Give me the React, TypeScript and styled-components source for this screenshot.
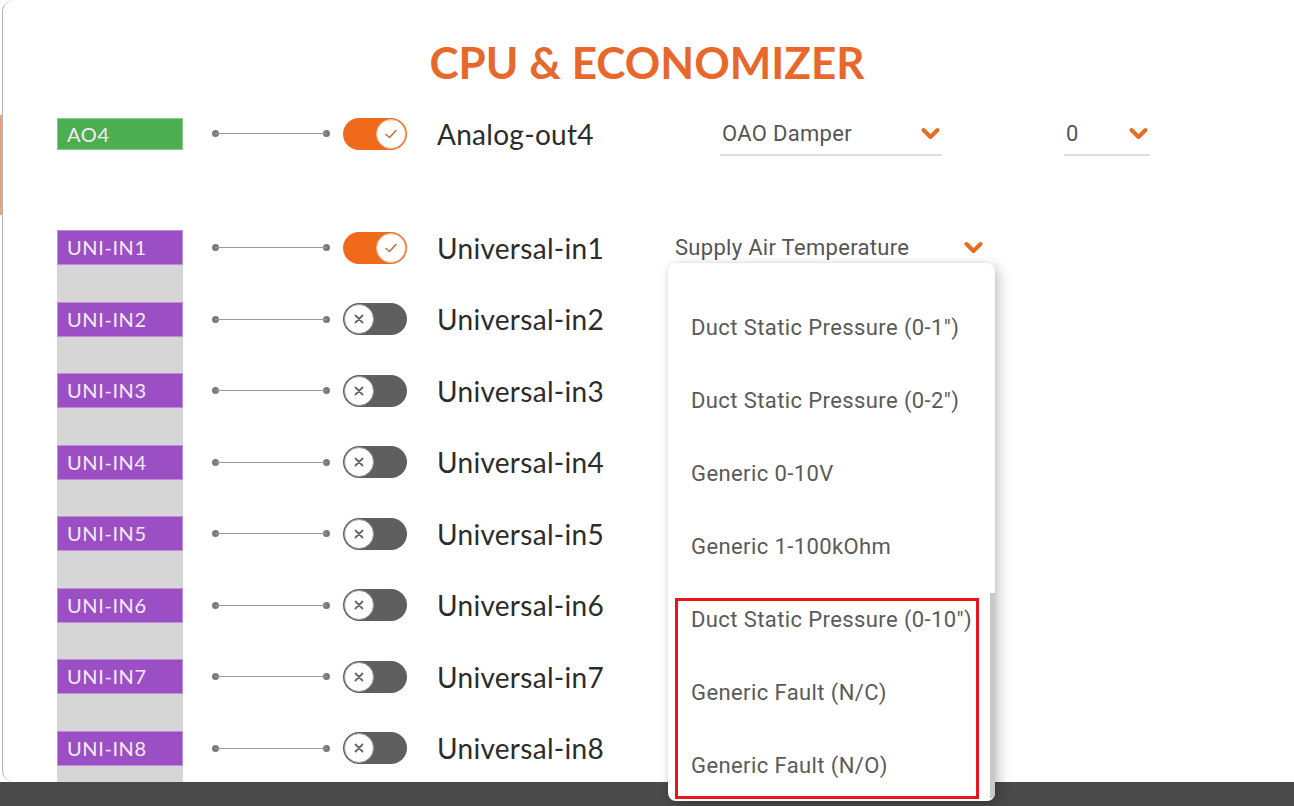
import styled, { createGlobalStyle } from "styled-components";

const GlobalStyle = createGlobalStyle`
    html, body {
        margin: 0;
        padding: 0;
        background: #ffffff;
    }
    * {
        box-sizing: border-box;
    }
`;

const Page = styled.div`
    position: relative;
    width: 1294px;
    height: 806px;
    overflow: hidden;
    display: flex;
    flex-direction: column;
    background: #ffffff;
`;

const Card = styled.div`
    height: 782px;
    margin-left: 2px;
    margin-right: 3px;
    border-left: 1px solid #b3b3b3;
    border-radius: 12px;
    background: #ffffff;
    overflow: hidden;
`;

const BottomBar = styled.div`
    flex: 1;
    background: #4a4a4a;
`;

const SideTab = styled.div`
    position: absolute;
    left: 0;
    top: 115px;
    width: 2px;
    height: 100px;
    background: #e9a47c;
`;

const Title = styled.h1`
    margin: 0;
    height: 98px;
    padding-top: 38px;
    text-align: center;
    font-family: Lato, "Liberation Sans", sans-serif;
    font-weight: 700;
    font-size: 44px;
    line-height: 48px;
    color: #e8672b;
`;

const Spacer = styled.div`
    height: 42.5px;
`;

const Row = styled.div`
    display: flex;
    align-items: center;
    height: 71.5px;
    padding-left: 54px;
`;

const LabelCell = styled.div<{ $strip: "none" | "first" | "full" }>`
    width: 126px;
    align-self: stretch;
    display: flex;
    align-items: center;
    background: ${(p) =>
        p.$strip === "none"
            ? "transparent"
            : p.$strip === "first"
            ? "linear-gradient(to bottom, transparent 50%, #d6d6d6 50%)"
            : "#d6d6d6"};
`;

const Label = styled.div<{ $color: string; $h: number }>`
    width: 126px;
    height: ${(p) => p.$h}px;
    background: ${(p) => p.$color};
    color: #f4ecf8;
    font-family: Lato, "Liberation Sans", sans-serif;
    font-size: 20px;
    letter-spacing: 0.6px;
    line-height: ${(p) => p.$h - 2}px;
    padding-left: 9px;
    border: 1px solid rgba(255, 255, 255, 0.35);
`;

const Connector = styled.div`
    position: relative;
    margin-left: 29px;
    width: 118px;
    height: 7px;
    display: flex;
    align-items: center;
    justify-content: space-between;

    &::before {
        content: "";
        position: absolute;
        left: 3px;
        right: 3px;
        top: 3px;
        height: 1px;
        background: #9a9a9a;
    }
`;

const Dot = styled.span`
    width: 7px;
    height: 7px;
    border-radius: 50%;
    background: #7a7a7a;
`;

const Track = styled.div<{ $on: boolean }>`
    margin-left: 13px;
    width: 64px;
    height: 32px;
    border-radius: 16px;
    background: ${(p) => (p.$on ? "#f06a1c" : "#5f5f5f")};
    display: flex;
    align-items: center;
    justify-content: ${(p) => (p.$on ? "flex-end" : "flex-start")};
    padding: 0 1px;
`;

const Knob = styled.div<{ $on: boolean }>`
    width: 30px;
    height: 30px;
    border-radius: 50%;
    background: #ffffff;
    border: 1.5px solid ${(p) => (p.$on ? "#f5b48c" : "#9a9a9a")};
    display: flex;
    align-items: center;
    justify-content: center;
`;

const Name = styled.div`
    margin-left: 30px;
    width: 236px;
    font-family: Lato, "Liberation Sans", sans-serif;
    font-size: 28px;
    letter-spacing: 0.3px;
    color: #2c2c2c;
    white-space: nowrap;
`;

const Select = styled.div<{ $offset: number; $width: number; $line: boolean }>`
    margin-left: ${(p) => p.$offset}px;
    width: ${(p) => p.$width}px;
    height: 44px;
    display: flex;
    align-items: center;
    justify-content: space-between;
    padding: 2px 2px 0 2px;
    border-bottom: 2px solid ${(p) => (p.$line ? "#dedede" : "transparent")};
    font-family: Roboto, "Liberation Sans", sans-serif;
    font-size: 22px;
    letter-spacing: 0.3px;
    color: #555555;
    white-space: nowrap;
`;

const Menu = styled.div`
    position: absolute;
    left: 668px;
    top: 263px;
    width: 327px;
    height: 538px;
    background: #ffffff;
    border-radius: 8px;
    box-shadow: 4px 4px 14px rgba(0, 0, 0, 0.22), 0 0 4px rgba(0, 0, 0, 0.08);
    padding-top: 27.5px;
    overflow: hidden;
`;

const MenuItem = styled.div`
    height: 73px;
    display: flex;
    align-items: center;
    padding-left: 23px;
    font-family: Roboto, "Liberation Sans", sans-serif;
    font-size: 22px;
    letter-spacing: 0.4px;
    color: #5a5a5a;
    white-space: nowrap;
`;

const ScrollThumb = styled.div`
    position: absolute;
    right: 0;
    top: 330px;
    width: 5px;
    height: 205px;
    background: #c9c9c9;
`;

const Highlight = styled.div`
    position: absolute;
    left: 675px;
    top: 598px;
    width: 304px;
    height: 201px;
    border: 3px solid #e8141e;
`;

function Chevron() {
    return (
        <svg width="19" height="13" viewBox="0 0 19 13">
            <polyline
                points="2.5,3 9.5,10 16.5,3"
                fill="none"
                stroke="#ea6a22"
                strokeWidth="4"
                strokeLinecap="round"
                strokeLinejoin="round"
            />
        </svg>
    );
}

function Toggle({ on }: { on: boolean }) {
    return (
        <Track $on={on}>
            <Knob $on={on}>
                {on ? (
                    <svg width="16" height="16" viewBox="0 0 16 16">
                        <polyline
                            points="3,8.5 6.5,11.5 13,4.5"
                            fill="none"
                            stroke="#c07048"
                            strokeWidth="1.6"
                            strokeLinecap="round"
                            strokeLinejoin="round"
                        />
                    </svg>
                ) : (
                    <svg width="12" height="12" viewBox="0 0 12 12">
                        <path
                            d="M2.5 2.5 L9.5 9.5 M9.5 2.5 L2.5 9.5"
                            stroke="#666"
                            strokeWidth="1.8"
                            strokeLinecap="round"
                        />
                    </svg>
                )}
            </Knob>
        </Track>
    );
}

function Link() {
    return (
        <Connector>
            <Dot />
            <Dot />
        </Connector>
    );
}

const inputs = [1, 2, 3, 4, 5, 6, 7, 8];

const options = [
    "Duct Static Pressure (0-1\")",
    "Duct Static Pressure (0-2\")",
    "Generic 0-10V",
    "Generic 1-100kOhm",
    "Duct Static Pressure (0-10\")",
    "Generic Fault (N/C)",
    "Generic Fault (N/O)",
];

export default function App() {
    return (
        <Page>
            <GlobalStyle />
            <SideTab />
            <Card>
                <Title>CPU &amp; ECONOMIZER</Title>
                <Row>
                    <LabelCell $strip="none">
                        <Label $color="#4cae50" $h={32}>
                            AO4
                        </Label>
                    </LabelCell>
                    <Link />
                    <Toggle on />
                    <Name>Analog-out4</Name>
                    <Select $offset={47} $width={222} $line>
                        <span>OAO Damper</span>
                        <Chevron />
                    </Select>
                    <Select $offset={122} $width={86} $line>
                        <span>0</span>
                        <Chevron />
                    </Select>
                </Row>
                <Spacer />
                {inputs.map((n) => (
                    <Row key={n}>
                        <LabelCell $strip={n === 1 ? "first" : "full"}>
                            <Label $color="#9c4fc5" $h={35}>
                                UNI-IN{n}
                            </Label>
                        </LabelCell>
                        <Link />
                        <Toggle on={n === 1} />
                        <Name>Universal-in{n}</Name>
                        {n === 1 && (
                            <Select $offset={0} $width={312} $line={false}>
                                <span>Supply Air Temperature</span>
                                <Chevron />
                            </Select>
                        )}
                    </Row>
                ))}
            </Card>
            <BottomBar />
            <Menu>
                {options.map((o) => (
                    <MenuItem key={o}>{o}</MenuItem>
                ))}
                <ScrollThumb />
            </Menu>
            <Highlight />
        </Page>
    );
}
